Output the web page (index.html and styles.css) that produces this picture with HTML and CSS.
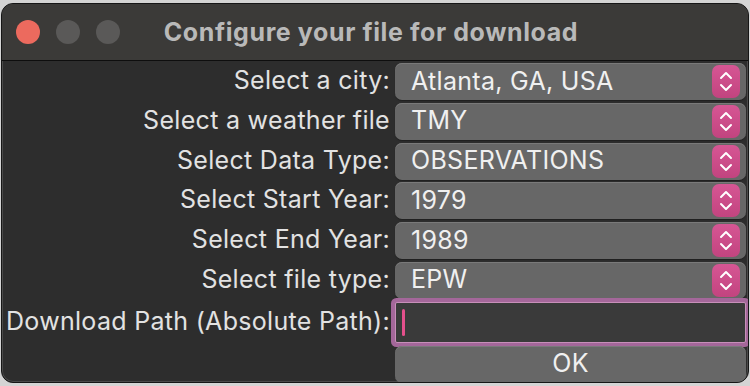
FILE: index.html
```html
<!DOCTYPE html>
<html>
	<head>
		<meta charset="utf-8">
		<title>Configure your file for download</title>
		<link rel="stylesheet" href="styles.css">
	</head>
	<body>
		<div class="window">
			<div class="titlebar">
				<div class="lights">
					<span class="light red"></span>
					<span class="light"></span>
					<span class="light"></span>
				</div>
				<div class="title">Configure your file for download</div>
				<div></div>
			</div>
			<div class="form">
				<label class="lbl">Select a city:</label>
				<div class="combo"><span>Atlanta, GA, USA</span><i class="step"><svg viewBox="0 0 28 33"><path d="M9 13l5-5 5 5M9 20l5 5 5-5"/></svg></i></div>

				<label class="lbl">Select a weather file</label>
				<div class="combo"><span>TMY</span><i class="step"><svg viewBox="0 0 28 33"><path d="M9 13l5-5 5 5M9 20l5 5 5-5"/></svg></i></div>

				<label class="lbl">Select Data Type:</label>
				<div class="combo"><span>OBSERVATIONS</span><i class="step"><svg viewBox="0 0 28 33"><path d="M9 13l5-5 5 5M9 20l5 5 5-5"/></svg></i></div>

				<label class="lbl">Select Start Year:</label>
				<div class="combo"><span>1979</span><i class="step"><svg viewBox="0 0 28 33"><path d="M9 13l5-5 5 5M9 20l5 5 5-5"/></svg></i></div>

				<label class="lbl">Select End Year:</label>
				<div class="combo"><span>1989</span><i class="step"><svg viewBox="0 0 28 33"><path d="M9 13l5-5 5 5M9 20l5 5 5-5"/></svg></i></div>

				<label class="lbl">Select file type:</label>
				<div class="combo"><span>EPW</span><i class="step"><svg viewBox="0 0 28 33"><path d="M9 13l5-5 5 5M9 20l5 5 5-5"/></svg></i></div>

				<label class="lbl">Download Path (Absolute Path):</label>
				<div class="input"><span class="caret"></span></div>

				<div></div>
				<div class="ok">OK</div>
			</div>
		</div>
	</body>
</html>
```

FILE: styles.css
```css
*{margin: 0;padding: 0;box-sizing: border-box;}
body{
	background: #d4d4d4;
	font-family: Inter, "Noto Sans", sans-serif;
	width: 750px;
	height: 386px;
	overflow: hidden;
	padding: 3px 1px 0 1px;
}
.window{
	width: 748px;
	height: 380px;
	border-radius: 12px;
	background: #2d2d2d;
	border: 1px solid #161616;
	box-shadow: inset 0 0 0 1px #4a4a4a;
	overflow: hidden;
}
.titlebar{
	height: 57px;
	background: #3b3a38;
	border-bottom: 1px solid #0e0e0e;
	display: grid;
	grid-template-columns: 1fr auto 1fr;
	align-items: center;
}
.lights{display: flex;gap: 16px;padding-left: 14px;}
.light{width: 24px;height: 24px;border-radius: 50%;background: #5a5958;}
.light.red{background: #ec6a5e;}
.title{
	font-size: 25px;
	font-weight: 700;
	letter-spacing: 0.6px;
	color: #b9b9b9;
	padding-right: 8px;
}
.form{
	display: grid;
	grid-template-columns: 388px 351px;
	column-gap: 5px;
	row-gap: 2.8px;
	padding-top: 2px;
	align-items: center;
}
.lbl{
	text-align: right;
	font-size: 25px;
	letter-spacing: 0.3px;
	color: #e2e2e2;
	line-height: 35px;
	padding-bottom: 2px;
	white-space: nowrap;
}
.combo{
	height: 37px;
	background: #676767;
	border-radius: 7px;
	box-shadow: inset 0 1px 0 #7a7a7a, 0 1px 1px #202020;
	display: flex;
	align-items: center;
	justify-content: space-between;
	padding: 0 6px 0 16px;
	font-size: 25px;
	letter-spacing: 0.3px;
	color: #f0f0f0;
}
.combo span{padding-bottom: 2px;}
.step{
	width: 28px;
	height: 33px;
	border-radius: 7px;
	background: linear-gradient(#d65694, #c2447f);
	display: flex;
}
.step svg{width: 28px;height: 33px;}
.step path{fill: none;stroke: #fff;stroke-width: 2;stroke-linecap: round;stroke-linejoin: round;}
.input{
	height: 41px;
	background: #3a3a3a;
	border: 1px solid #c78fb9;
	box-shadow: 0 0 0 4px #a4679a;
	border-radius: 2px;
	display: flex;
	align-items: center;
	padding-left: 6px;
}
.caret{width: 3px;height: 27px;border-radius: 2px;background: #e4508c;}
.ok{
	height: 37px;
	background: #676767;
	border-radius: 7px;
	box-shadow: inset 0 1px 0 #7a7a7a;
	text-align: center;
	line-height: 35px;
	font-size: 25px;
	letter-spacing: 0.3px;
	color: #f0f0f0;
}
```
